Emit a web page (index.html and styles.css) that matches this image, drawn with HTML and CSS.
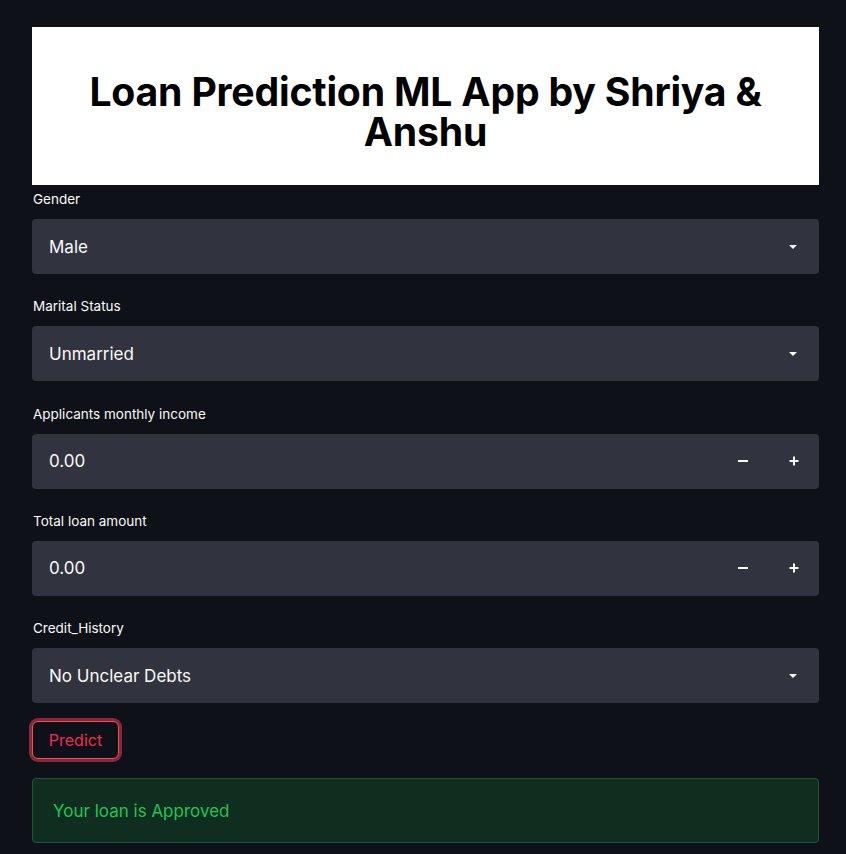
FILE: index.html
```html
<!DOCTYPE html>
<html lang="en">
<head>
    <meta charset="UTF-8">
    <meta name="viewport" content="width=device-width, initial-scale=1.0">
    <title>Loan Prediction ML App</title>
    <link rel="stylesheet" href="styles.css">
</head>
<body>
    <div class="main">
        <div class="banner">
            <h1>Loan Prediction ML App by Shriya &amp; Anshu</h1>
        </div>

        <div class="field">
            <label>Gender</label>
            <div class="select">
                <span>Male</span>
                <svg class="caret" width="10" height="6" viewBox="0 0 10 6"><path d="M1 1h8L5 5z" fill="#fafafa"/></svg>
            </div>
        </div>

        <div class="field">
            <label>Marital Status</label>
            <div class="select">
                <span>Unmarried</span>
                <svg class="caret" width="10" height="6" viewBox="0 0 10 6"><path d="M1 1h8L5 5z" fill="#fafafa"/></svg>
            </div>
        </div>

        <div class="field">
            <label>Applicants monthly income</label>
            <div class="number">
                <span class="value">0.00</span>
                <button class="step"><svg width="12" height="12" viewBox="0 0 12 12"><path d="M1 6h10" stroke="#fafafa" stroke-width="2"/></svg></button>
                <button class="step"><svg width="12" height="12" viewBox="0 0 12 12"><path d="M1.5 6h9M6 1.5v9" stroke="#fafafa" stroke-width="2"/></svg></button>
            </div>
        </div>

        <div class="field">
            <label>Total loan amount</label>
            <div class="number">
                <span class="value">0.00</span>
                <button class="step"><svg width="12" height="12" viewBox="0 0 12 12"><path d="M1 6h10" stroke="#fafafa" stroke-width="2"/></svg></button>
                <button class="step"><svg width="12" height="12" viewBox="0 0 12 12"><path d="M1.5 6h9M6 1.5v9" stroke="#fafafa" stroke-width="2"/></svg></button>
            </div>
        </div>

        <div class="field">
            <label>Credit_History</label>
            <div class="select">
                <span>No Unclear Debts</span>
                <svg class="caret" width="10" height="6" viewBox="0 0 10 6"><path d="M1 1h8L5 5z" fill="#fafafa"/></svg>
            </div>
        </div>

        <div class="actions">
            <button class="predict">Predict</button>
        </div>

        <div class="alert-success">Your loan is Approved</div>
    </div>
</body>
</html>
```

FILE: styles.css
```css
body {
    margin: 0;
    background: #0e1117;
    color: #fafafa;
    font-family: Inter, "Noto Sans", sans-serif;
}
.main {
    width: 787px;
    margin: 0 0 0 32px;
    padding-top: 27px;
}
.banner {
    background: #fff;
    height: 158px;
    box-sizing: border-box;
    padding-top: 12px;
    display: flex;
    align-items: center;
    justify-content: center;
}
h1 {
    margin: 0;
    padding: 0 40px;
    text-align: center;
    color: #000;
    font-size: 39.2px;
    font-weight: 700;
    line-height: 40px;
    letter-spacing: -0.2px;
}
.field {
    margin-top: 5px;
    margin-bottom: 23.3px;
}
.field + .field {
    margin-top: 0;
}
label {
    display: block;
    font-size: 13.5px;
    line-height: 18px;
    padding-left: 1px;
    margin-bottom: 11px;
}
.select,
.number {
    height: 55px;
    background: #31333f;
    border-radius: 4px;
    display: flex;
    align-items: center;
    font-size: 17px;
}
.select {
    padding: 0 21px 0 17px;
    justify-content: space-between;
}
.number {
    padding-left: 17px;
}
.number .value {
    flex: 1;
}
.step {
    width: 51px;
    height: 55px;
    border: none;
    background: transparent;
    display: flex;
    align-items: center;
    justify-content: center;
    padding: 0;
}
.actions {
    margin-top: -5px;
}
.predict {
    height: 38px;
    width: 87px;
    background: #0e1117;
    border: 1px solid #ff4b4b;
    border-radius: 6px;
    box-shadow: 0 0 0 3px rgba(230, 60, 100, 0.55);
    color: #ee2d55;
    font-family: inherit;
    font-size: 16px;
}
.alert-success {
    margin-top: 19px;
    height: 65px;
    box-sizing: border-box;
    display: flex;
    align-items: center;
    padding-left: 20px;
    background: #0f2e1f;
    border: 1px solid #1a5a31;
    border-radius: 4px;
    color: #21c354;
    font-size: 17px;
}
```
